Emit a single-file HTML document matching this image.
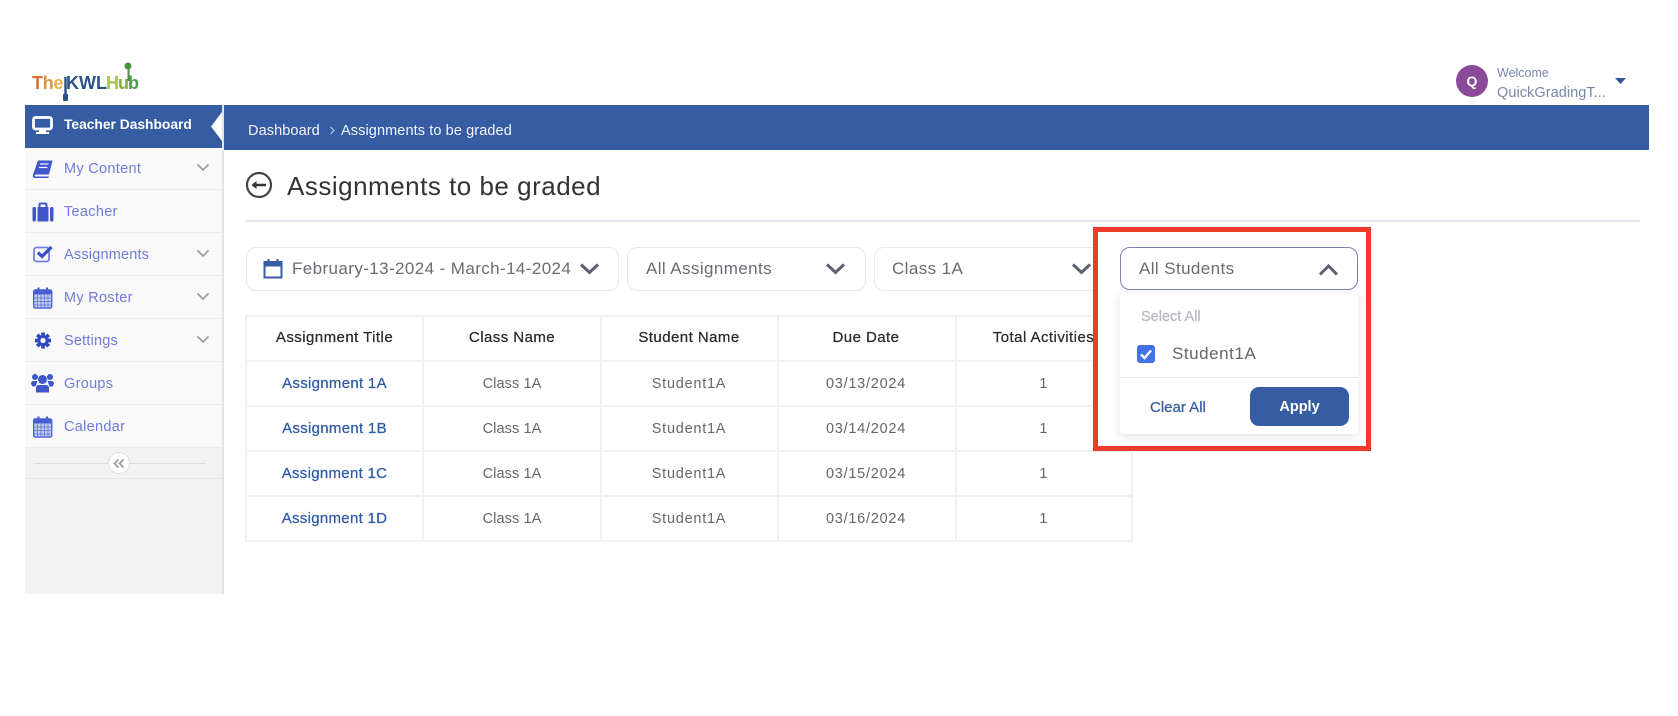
<!DOCTYPE html>
<html><head><meta charset="utf-8">
<style>
html,body{margin:0;padding:0;background:#fff}
body{width:1678px;height:716px;position:relative;overflow:hidden;font-family:"Liberation Sans",sans-serif;filter:blur(.3px)}
.a{position:absolute}
.t{position:absolute;white-space:nowrap;line-height:20px}
.side{position:absolute;left:25px;top:105px;width:197px;height:489px;background:#f2f2f2;border-right:2px solid #e3e3e3}
.item{position:absolute;left:25px;width:197px;height:41.500px;background:#f9f9f9;border-bottom:1.500px solid #ececec}
.lbl{position:absolute;left:64px;font-size:14.5px;color:#6f7bdc;white-space:nowrap;line-height:20px;letter-spacing:.2px}
.box{position:absolute;top:247px;height:42px;border:1px solid #e9e9e9;border-radius:10px;background:#fff;box-sizing:content-box}
.ft{position:absolute;top:259px;font-size:17px;color:#6b6b72;line-height:20px;white-space:nowrap;letter-spacing:.4px}
.c{position:absolute;text-align:center;font-size:14.5px;line-height:20px;white-space:nowrap}
.h{color:#2b2b2b;-webkit-text-stroke:.25px #2b2b2b;font-size:15px;letter-spacing:.45px}
.g{color:#666;letter-spacing:.1px}
.n{color:#666;letter-spacing:.75px}
.l{color:#2f5aa6;-webkit-text-stroke:.25px #2f5aa6;font-size:15px;letter-spacing:.3px}
.hl{position:absolute;left:246px;width:887px;height:2px;background:#f1f1f1}
.vl{position:absolute;top:316px;width:2px;height:226px;background:#f1f1f1}
</style></head><body>

<!-- logo -->
<div class="t" style="left:32px;top:72px;font-size:18px;font-weight:bold;line-height:22px;letter-spacing:-.3px"><span style="color:#d9703a">T</span><span style="color:#dc9440">h</span><span style="color:#e6b04a">e</span></div>
<div class="t" style="left:66px;top:72px;font-size:18px;font-weight:bold;line-height:22px;color:#2c5288;letter-spacing:0">KWL</div>
<div class="t" style="left:106px;top:72px;font-size:18px;font-weight:bold;line-height:22px;letter-spacing:-1px"><span style="color:#a3c14a">H</span><span style="color:#7fae48">u</span><span style="color:#4f9a4a">b</span></div>
<svg class="a" style="left:25px;top:55px" width="120" height="50"><path d="M40.500 22V40" stroke="#2c5288" stroke-width="2.500" fill="none"/><rect x="38" y="39" width="5" height="7" rx="1" fill="#2c5288"/><circle cx="103" cy="11" r="3.500" fill="#4f8f45"/><path d="M103.500 12V26" stroke="#4f8f45" stroke-width="2" fill="none"/></svg>

<!-- user -->
<div class="a" style="left:1456px;top:65px;width:32px;height:32px;border-radius:50%;background:#8a4a99;color:#fff;font-weight:bold;font-size:14px;line-height:32px;text-align:center">Q</div>
<div class="t" style="left:1497px;top:63px;font-size:12.500px;color:#7b86ad">Welcome</div>
<div class="t" style="left:1497px;top:83px;font-size:14.500px;color:#7b86ad;letter-spacing:.06px">QuickGradingT...</div>
<svg class="a" style="left:1615px;top:78px" width="12" height="8"><path d="M0 0H11L5.500 6Z" fill="#2f5597"/></svg>

<!-- sidebar -->
<div class="side"></div>
<div class="a" style="left:25px;top:478px;width:197px;height:1px;background:#e6e6e6"></div>
<div class="a" style="left:25px;top:105px;width:197px;height:43px;background:#365da3"></div>
<svg class="a" style="left:211px;top:105px" width="11" height="43"><path d="M11 7L0 21.500L11 36Z" fill="#fff"/></svg>
<div class="item" style="top:148px;height:40.500px"></div><div class="item" style="top:190px"></div><div class="item" style="top:233px"></div><div class="item" style="top:276px"></div><div class="item" style="top:319px"></div><div class="item" style="top:362px"></div><div class="item" style="top:405px"></div>

<svg class="a" style="left:31px;top:115px" width="23" height="20"><rect x="2.500" y="2.500" width="18" height="11.500" rx="2" fill="#365da3" stroke="#fff" stroke-width="2.800"/><path d="M8 15H15V17H18V19H5V17H8Z" fill="#fff"/></svg>
<div class="t" style="left:64px;top:115px;font-size:13.800px;font-weight:bold;color:#fff">Teacher Dashboard</div>

<svg class="a" style="left:32px;top:159px" width="22" height="20"><path d="M6 1.500H20.500L17 15.500H4C2.500 15.500 2 17.500 4 17.500H17L16.500 19H3C1 19 .5 17.500 1 15.500Z" fill="#3f57c9"/><path d="M8 5H16.500M7 8.500H15.500" stroke="#f0f2fc" stroke-width="1.300"/></svg>
<div class="lbl" style="top:159px;letter-spacing:.3px">My Content</div>
<svg class="a" style="left:32px;top:202px" width="22" height="20"><path d="M7.500 5V2.500C7.500 2 8 1.500 8.500 1.500H13.500C14 1.500 14.500 2 14.500 2.500V5" fill="none" stroke="#3f57c9" stroke-width="2"/><rect x="0.500" y="5" width="3.500" height="14.500" rx="1.500" fill="#3f57c9"/><rect x="5.500" y="5" width="11" height="14.500" fill="#3f57c9"/><rect x="18" y="5" width="3.500" height="14.500" rx="1.500" fill="#3f57c9"/></svg>
<div class="lbl" style="top:202px;letter-spacing:.3px">Teacher</div>
<svg class="a" style="left:32px;top:244px" width="22" height="19"><rect x="2" y="3.500" width="15" height="14" rx="2.500" fill="none" stroke="#6f7fdc" stroke-width="1.800"/><path d="M6 8.500L10 12.500L19.500 3" fill="none" stroke="#3350c9" stroke-width="3.200"/></svg>
<div class="lbl" style="top:245px">Assignments</div>
<svg class="a" style="left:33px;top:287px" width="20" height="22"><rect x=".7" y="3" width="18" height="18" rx="1.500" fill="#c9cef3" stroke="#4a60d2" stroke-width="1.400"/><path d="M1 3H19V7.500H1Z" fill="#4a60d2"/><path d="M5.500 .5V5M14 .5V5" stroke="#4a60d2" stroke-width="2.200"/><path d="M1 11H19M1 14.500H19M1 18H19M4.500 7V21M8 7V21M11.500 7V21M15 7V21" stroke="#6d80e0" stroke-width="1"/></svg>
<div class="lbl" style="top:288px;letter-spacing:.3px">My Roster</div>
<svg class="a" style="left:33px;top:331px" width="20" height="19"><path d="M10 1.500V17.500M2 9.500H18M4.300 3.800L15.700 15.200M15.700 3.800L4.300 15.200" stroke="#2f49c4" stroke-width="3.800"/><circle cx="10" cy="9.500" r="5.500" fill="#2f49c4"/><circle cx="10" cy="9.500" r="2.600" fill="#f9f9f9"/></svg>
<div class="lbl" style="top:331px">Settings</div>
<svg class="a" style="left:31px;top:373px" width="23" height="20"><circle cx="11.500" cy="6.500" r="4.500" fill="#3f57c9"/><circle cx="4" cy="4" r="3" fill="#3f57c9"/><circle cx="19" cy="4" r="3" fill="#3f57c9"/><path d="M5 19.500V15C5 12.500 7 12 8 12H15C16 12 18 12.500 18 15V19.500Z" fill="#3f57c9"/><path d="M0 11C0 8.500 1.500 8 3 8H6.500L4.500 13.500H1.500Z M23 11C23 8.500 21.500 8 20 8H16.500L18.500 13.500H21.500Z" fill="#3f57c9"/></svg>
<div class="lbl" style="top:374px;letter-spacing:.3px">Groups</div>
<svg class="a" style="left:33px;top:416px" width="20" height="22"><rect x=".7" y="3" width="18" height="18" rx="1.500" fill="#c9cef3" stroke="#4a60d2" stroke-width="1.400"/><path d="M1 3H19V7.500H1Z" fill="#4a60d2"/><path d="M5.500 .5V5M14 .5V5" stroke="#4a60d2" stroke-width="2.200"/><path d="M1 11H19M1 14.500H19M1 18H19M4.500 7V21M8 7V21M11.500 7V21M15 7V21" stroke="#6d80e0" stroke-width="1"/></svg>
<div class="lbl" style="top:417px;letter-spacing:.3px">Calendar</div>
<svg class="a" style="left:196px;top:163px" width="14" height="10"><path d="M1.500 1.500L7 7L12.500 1.500" fill="none" stroke="#999" stroke-width="1.600"/></svg>
<svg class="a" style="left:196px;top:249px" width="14" height="10"><path d="M1.500 1.500L7 7L12.500 1.500" fill="none" stroke="#999" stroke-width="1.600"/></svg>
<svg class="a" style="left:196px;top:292px" width="14" height="10"><path d="M1.500 1.500L7 7L12.500 1.500" fill="none" stroke="#999" stroke-width="1.600"/></svg>
<svg class="a" style="left:196px;top:335px" width="14" height="10"><path d="M1.500 1.500L7 7L12.500 1.500" fill="none" stroke="#999" stroke-width="1.600"/></svg>
<div class="a" style="left:35px;top:463px;width:171px;height:1px;background:#dcdcdc"></div>
<div class="a" style="left:108px;top:452px;width:20px;height:20px;border:1.500px solid #ddd;border-radius:50%;background:#fff"></div>
<svg class="a" style="left:113px;top:458px" width="12" height="11"><path d="M5.500 1.500L1.500 5.500L5.500 9.500M10.500 1.500L6.500 5.500L10.500 9.500" fill="none" stroke="#999" stroke-width="1.700"/></svg>

<!-- top bar -->
<div class="a" style="left:224px;top:105px;width:1425px;height:45px;background:#365da3"></div>
<div class="t" style="left:248px;top:121px;font-size:14.500px;color:#f2f4f9;letter-spacing:.1px">Dashboard</div>
<svg class="a" style="left:329px;top:126px" width="7" height="9"><path d="M1.500 1L5 4.500L1.500 8" fill="none" stroke="#cfd8ea" stroke-width="1"/></svg>
<div class="t" style="left:341px;top:121px;font-size:14.500px;color:#f2f4f9;letter-spacing:.1px">Assignments to be graded</div>

<!-- heading -->
<svg class="a" style="left:245px;top:171px" width="28" height="28"><circle cx="14" cy="14" r="12" fill="none" stroke="#444" stroke-width="2.200"/><path d="M8 14H21" stroke="#333" stroke-width="2.500"/><path d="M6.500 14L11.500 10V18Z" fill="#333"/></svg>
<div class="t" style="left:287px;top:171px;font-size:26px;line-height:30px;color:#333;letter-spacing:.5px">Assignments to be graded</div>
<div class="a" style="left:246px;top:220px;width:1394px;height:2px;background:#e4e7f1"></div>

<!-- filters -->
<div class="box" style="left:246px;width:371px"></div>
<svg class="a" style="left:263px;top:258px" width="21" height="21"><rect x="1.500" y="4" width="17" height="15.500" fill="none" stroke="#365da3" stroke-width="2"/><path d="M1 4H19V8.500H1Z" fill="#365da3"/><path d="M5.500 1V5M14.500 1V5" stroke="#365da3" stroke-width="2"/></svg>
<div class="ft" style="left:292px">February-13-2024 - March-14-2024</div>
<svg class="a" style="left:579px;top:262px" width="21" height="14"><path d="M2 2.500L10.500 10.500L19 2.500" fill="none" stroke="#5c5f72" stroke-width="3"/></svg>
<div class="box" style="left:627px;width:237px"></div>
<div class="ft" style="left:646px">All Assignments</div>
<svg class="a" style="left:825px;top:262px" width="21" height="14"><path d="M2 2.500L10.500 10.500L19 2.500" fill="none" stroke="#5c5f72" stroke-width="3"/></svg>
<div class="box" style="left:874px;width:237px"></div>
<div class="ft" style="left:892px">Class 1A</div>
<svg class="a" style="left:1071px;top:262px" width="21" height="14"><path d="M2 2.500L10.500 10.500L19 2.500" fill="none" stroke="#5c5f72" stroke-width="3"/></svg>

<!-- table -->
<div class="hl" style="top:315px"></div><div class="hl" style="top:360px"></div><div class="hl" style="top:405px"></div><div class="hl" style="top:450px"></div><div class="hl" style="top:495px"></div><div class="hl" style="top:540px"></div>
<div class="vl" style="left:245px"></div><div class="vl" style="left:422px"></div><div class="vl" style="left:600px"></div><div class="vl" style="left:777px"></div><div class="vl" style="left:955px"></div><div class="vl" style="left:1131px"></div>

<div class="c h" style="left:246px;width:177px;top:328px">Assignment Title</div>
<div class="c h" style="left:423px;width:178px;top:328px">Class Name</div>
<div class="c h" style="left:600px;width:178px;top:328px">Student Name</div>
<div class="c h" style="left:777px;width:178px;top:328px">Due Date</div>
<div class="c h" style="left:955px;width:177px;top:328px">Total Activities</div>

<div class="c l" style="left:246px;width:177px;top:374px">Assignment 1A</div><div class="c g" style="left:423px;width:178px;top:374px">Class 1A</div><div class="c n" style="left:600px;width:178px;top:374px">Student1A</div><div class="c n" style="left:777px;width:178px;top:374px">03/13/2024</div><div class="c g" style="left:955px;width:177px;top:374px">1</div>
<div class="c l" style="left:246px;width:177px;top:419px">Assignment 1B</div><div class="c g" style="left:423px;width:178px;top:419px">Class 1A</div><div class="c n" style="left:600px;width:178px;top:419px">Student1A</div><div class="c n" style="left:777px;width:178px;top:419px">03/14/2024</div><div class="c g" style="left:955px;width:177px;top:419px">1</div>
<div class="c l" style="left:246px;width:177px;top:464px">Assignment 1C</div><div class="c g" style="left:423px;width:178px;top:464px">Class 1A</div><div class="c n" style="left:600px;width:178px;top:464px">Student1A</div><div class="c n" style="left:777px;width:178px;top:464px">03/15/2024</div><div class="c g" style="left:955px;width:177px;top:464px">1</div>
<div class="c l" style="left:246px;width:177px;top:509px">Assignment 1D</div><div class="c g" style="left:423px;width:178px;top:509px">Class 1A</div><div class="c n" style="left:600px;width:178px;top:509px">Student1A</div><div class="c n" style="left:777px;width:178px;top:509px">03/16/2024</div><div class="c g" style="left:955px;width:177px;top:509px">1</div>

<!-- red highlight -->
<div class="a" style="left:1093px;top:227px;width:268px;height:214px;border:5px solid #ee3a2b;background:#fff"></div>

<div class="a" style="left:1120px;top:247px;width:236px;height:41px;border:1px solid #7d82b5;border-radius:10px;background:#fff"></div>
<div class="ft" style="left:1139px">All Students</div>
<svg class="a" style="left:1318px;top:263px" width="21" height="14"><path d="M2 11.500L10.500 3L19 11.500" fill="none" stroke="#5c5f72" stroke-width="3"/></svg>
<div class="a" style="left:1120px;top:293px;width:238px;height:141px;background:#fff;border-radius:4px;box-shadow:0 2px 10px rgba(0,0,0,.12)"></div>
<div class="t" style="left:1141px;top:307px;font-size:14.500px;color:#b7b7bf;-webkit-text-stroke:.2px #b7b7bf">Select All</div>
<div class="a" style="left:1137px;top:345px;width:18px;height:18px;background:#4372e8;border-radius:3px"></div>
<svg class="a" style="left:1137px;top:345px" width="18" height="18"><path d="M4 9.500L7.500 13L14 5.500" fill="none" stroke="#fff" stroke-width="2.400"/></svg>
<div class="t" style="left:1172px;top:344px;font-size:17px;color:#666;letter-spacing:.55px">Student1A</div>
<div class="a" style="left:1120px;top:377px;width:238px;height:1px;background:#e8e8e8"></div>
<div class="t" style="left:1150px;top:398px;font-size:15px;color:#365da3;-webkit-text-stroke:.25px #365da3">Clear All</div>
<div class="a" style="left:1250px;top:387px;width:99px;height:39px;background:#365da3;border-radius:9px;color:#fff;font-size:14.500px;font-weight:bold;line-height:41px;text-align:center">Apply</div>
</body></html>
